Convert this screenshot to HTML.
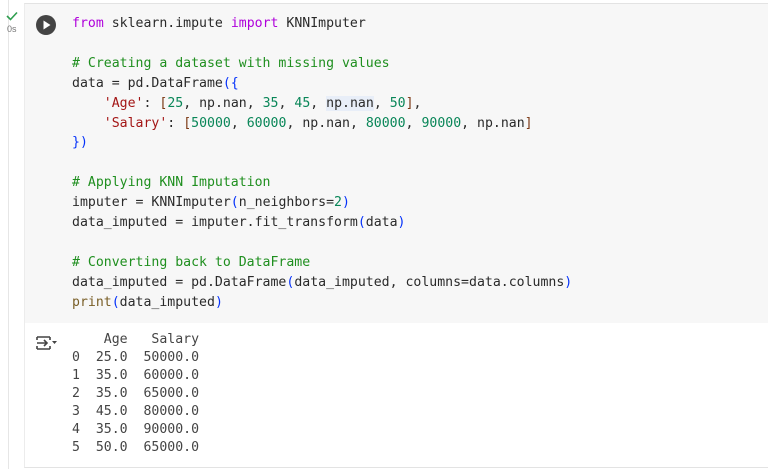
<!DOCTYPE html>
<html><head><style>
body{margin:0;width:768px;height:469px;background:#fff;position:relative;overflow:hidden;font-family:"DejaVu Sans Mono",monospace;}
.lb{position:absolute;left:8px;top:0;width:1px;height:469px;background:#e6e6e6}
.cell{position:absolute;left:24px;top:3px;width:744px;height:463px;border-top:1px solid #e3e3e3;border-bottom:1px solid #e3e3e3;border-left:1px solid #ececec}
.code{position:absolute;left:0;top:0;width:744px;height:319px;background:#f7f7f7}
pre{margin:0;position:absolute;font-family:"DejaVu Sans Mono",monospace;font-size:13.2px;line-height:19.9px;color:#2a2a2a}
.k{color:#af00db}.c{color:#1f8f1f}.s{color:#a31515}.n{color:#098658}.b1{color:#0431fa}.b2{color:#7b3814}
.out{color:#444}
</style></head><body>
<div class="lb"></div>
<svg style="position:absolute;left:6px;top:11px" width="12" height="10"><path d="M1 5 L4.5 8.5 L11 1.5" stroke="#2e9e4f" stroke-width="1.6" fill="none"/></svg>
<div style="position:absolute;left:7px;top:24px;font:9px 'Liberation Sans',sans-serif;color:#777">0s</div>
<div class="cell">
<div class="code"></div>
<svg style="position:absolute;left:10px;top:10px" width="22" height="22"><circle cx="11" cy="11" r="10" fill="#444"/><path d="M8.5 6.5 L15.5 11 L8.5 15.5Z" fill="#fff"/></svg>
<pre style="left:47px;top:10px"><span class="k">from</span> sklearn.impute <span class="k">import</span> KNNImputer

<span class="c"># Creating a dataset with missing values</span>
data = pd.DataFrame<span class="b1">({</span>
    <span class="s">'Age'</span>: <span class="b2">[</span><span class="n">25</span>, np.nan, <span class="n">35</span>, <span class="n">45</span>, <span style="background:#e8eef8">np.nan</span>, <span class="n">50</span><span class="b2">]</span>,
    <span class="s">'Salary'</span>: <span class="b2">[</span><span class="n">50000</span>, <span class="n">60000</span>, np.nan, <span class="n">80000</span>, <span class="n">90000</span>, np.nan<span class="b2">]</span>
<span class="b1">})</span>

<span class="c"># Applying KNN Imputation</span>
imputer = KNNImputer<span class="b1">(</span>n_neighbors=<span class="n">2</span><span class="b1">)</span>
data_imputed = imputer.fit_transform<span class="b1">(</span>data<span class="b1">)</span>

<span class="c"># Converting back to DataFrame</span>
data_imputed = pd.DataFrame<span class="b1">(</span>data_imputed, columns=data.columns<span class="b1">)</span>
<span style="color:#795e26">print</span><span class="b1">(</span>data_imputed<span class="b1">)</span></pre>
<svg style="position:absolute;left:11px;top:331px" width="22" height="16"><path d="M1 2 H14 M1 14 H14 M1 8 H11 M8 5 L11 8 L8 11 M1 2 V5 M1 11 V14 M14 11 V14 M14 2 V5" stroke="#444" stroke-width="1.6" fill="none"/><path d="M16 6 H21 L18.5 9Z" fill="#444"/></svg>
<pre class="out" style="left:47px;top:327px;line-height:18px;font-size:13.2px">    Age   Salary
0  25.0  50000.0
1  35.0  60000.0
2  35.0  65000.0
3  45.0  80000.0
4  35.0  90000.0
5  50.0  65000.0</pre>
</div>
</body></html>
